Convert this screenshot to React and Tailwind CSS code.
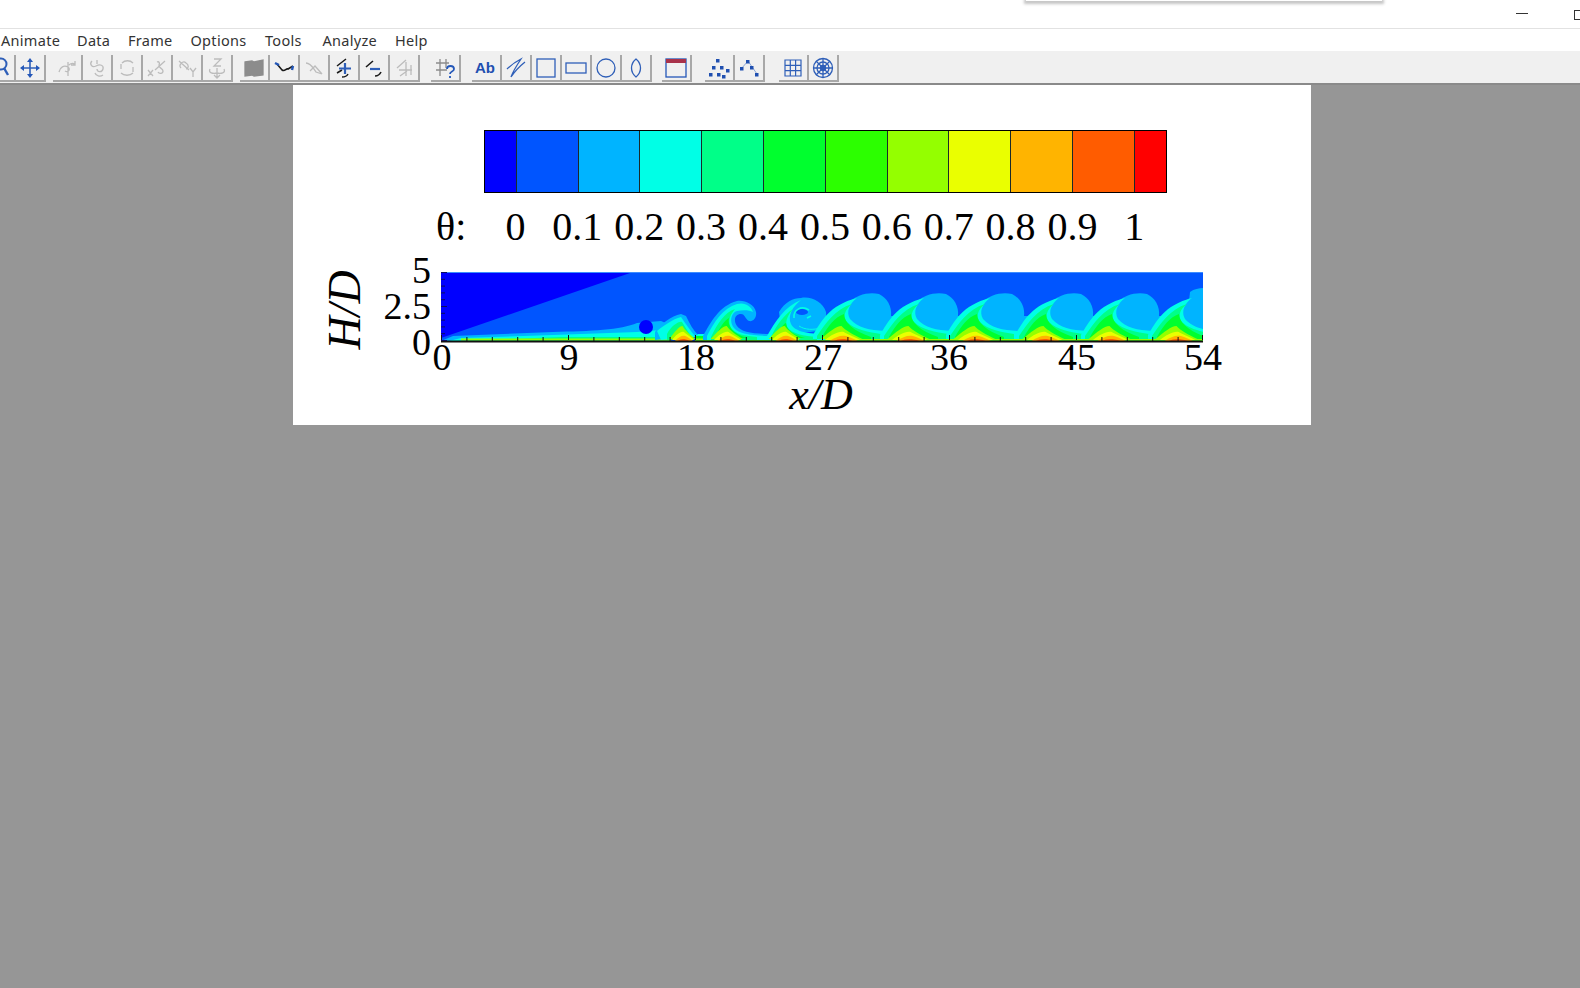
const times = { fontFamily: '"Liberation Serif", serif' };

const BAR = [
  ["#0000ff", 32],
  ["#0055ff", 62],
  ["#00b4ff", 61],
  ["#00ffe6", 62],
  ["#00ff88", 62],
  ["#00ff2e", 62],
  ["#2cff00", 62],
  ["#94ff00", 61],
  ["#eaff00", 62],
  ["#ffb400", 62],
  ["#ff5c00", 62],
  ["#ff0000", 31],
];

const LEVELS = ["0", "0.1", "0.2", "0.3", "0.4", "0.5", "0.6", "0.7", "0.8", "0.9", "1"];
const MENU = [
  ["Animate", "w-[76px]"],
  ["Data", "w-[51px]"],
  ["Frame", "w-[62.5px]"],
  ["Options", "w-[74.5px]"],
  ["Tools", "w-[57.5px]"],
  ["Analyze", "w-[72.5px]"],
  ["Help", "w-[40px]"],
];
const XTICKS = [
  ["0", 1],
  ["9", 128],
  ["18", 255],
  ["27", 382],
  ["36", 508],
  ["45", 636],
  ["54", 762],
];
const CRESTS = [414, 481, 547, 616, 682, 749];

const Tool = ({ children, off }) => (
  <div className="w-[30px] h-[27px] flex items-center justify-center border-r-2 border-b-2 border-[#a8a8a8]">
    <svg width="24" height="24" viewBox="0 0 24 24" fill="none" stroke={off ? "#bcbcbc" : "#2f5fb8"} strokeWidth="1.3">
      {children}
    </svg>
  </div>
);

// hot layers sitting on the wall under a wave
const Bumps = ({ c, s = 1 }) => (
  <>
    <path fill="#94ff00" d={`M${c - 24 * s} 67 C${c - 16 * s} 60 ${c - 10 * s} 54 ${c - 5 * s} 54 C${c - 2 * s} 58 ${c + 6 * s} 63 ${c + 14 * s} 67 Z`} />
    <path fill="#eaff00" d={`M${c - 20 * s} 68 C${c - 14 * s} 63 ${c - 8 * s} 59 ${c - 3 * s} 60 C${c + 1 * s} 63 ${c + 8 * s} 65 ${c + 12 * s} 68 Z`} />
    <path fill="#ffb400" d={`M${c - 16 * s} 69 C${c - 10 * s} 65 ${c - 6 * s} 63 ${c - 1 * s} 64 C${c + 3 * s} 65 ${c + 6 * s} 67 ${c + 10 * s} 69 Z`} />
    <path fill="#ff5c00" d={`M${c - 12 * s} 69 C${c - 8 * s} 67 ${c - 3 * s} 66 ${c + 5 * s} 69 Z`} />
  </>
);

const Core = ({ c }) => (
  <path
    fill="#00b4ff"
    d={`M${c - 8} 32 C${c + 2} 22 ${c + 14} 20 ${c + 24} 22 C${c + 32} 26 ${c + 37} 34 ${c + 36} 44 L${c + 30} 58 L${c + 6} 62 L${c - 10} 50 Z`}
  />
);

const Crest = ({ c }) => (
  <>
    <path
      fill="#00ffe6"
      d={`M${c - 42} 63 C${c - 34} 50 ${c - 26} 33 ${c + 2} 26 C${c - 6} 32 ${c - 9} 40 ${c - 5} 47 C${c + 3} 56 ${c + 14} 58 ${c + 30} 59 L${c + 30} 67 L${c - 42} 67 Z`}
    />
    <path
      fill="#00ff88"
      d={`M${c - 38} 64 C${c - 30} 52 ${c - 20} 37 ${c - 3} 32 C${c - 11} 38 ${c - 12} 45 ${c - 8} 50 C${c} 58 ${c + 14} 60 ${c + 26} 62 L${c + 26} 67 L${c - 38} 67 Z`}
    />
    <path fill="#00ff2e" d={`M${c - 33} 65 C${c - 27} 54 ${c - 20} 45 ${c - 11} 42 C${c - 11} 50 ${c - 2} 59 ${c + 16} 65 L${c + 16} 67 L${c - 33} 67 Z`} />
    <Bumps c={c - 8} s={1.1} />
  </>
);

const Plot = () => (
  <svg width="762" height="72" viewBox="0 0 762 72" className="block">
    <rect width="762" height="70" fill="#0055ff" />
    <polygon points="0,0 192,0 0,66" fill="#0000ff" />

    {/* developing layer before the first wave */}
    <path fill="#00b4ff" d="M0 69 L12 64 L112 60 C150 59 180 58 196 51 L220 49 L236 56 L250 66 L0 70 Z" />
    <path fill="#00ffe6" d="M8 69 L20 66 L112 63 L196 60 L220 58 L222 68 Z" />
    <path fill="#00ff88" d="M12 69 L120 65 L230 65 L230 69 Z" />
    <rect x="20" y="66.5" width="210" height="2" fill="#94ff00" />
    <circle cx="205" cy="55" r="7" fill="#0000ff" />

    {/* wall band under the rolled up part */}
    <rect x="254" y="62" width="508" height="7" fill="#00ffe6" />
    <rect x="254" y="64" width="508" height="5" fill="#00ff2e" />
    <rect x="254" y="66.5" width="508" height="2" fill="#94ff00" />

    {/* first bump */}
    <path fill="#00b4ff" d="M214 60 C220 52 230 44 240 42 L245 44 C249 52 252 58 257 63 L214 68 Z" />
    <path fill="#00ffe6" d="M216 59 C222 54 232 47 240 45 C245 52 250 60 255 65 L220 68 Z" />
    <path fill="#00ff88" d="M226 62 C230 54 238 49 241 50 C245 56 248 62 252 66 L226 68 Z" />
    <path fill="#2cff00" d="M232 64 C236 58 239 54 241 55 C244 60 247 63 250 67 L232 68 Z" />
    <Bumps c={245} s={0.7} />

    {/* second wave, small hook */}
    <path fill="#00b4ff" d="M262 64 C270 50 278 34 296 29 C304 28 313 32 315 40 C316 46 312 50 308 49 C304 47 304 42 300 42 C294 42 292 48 296 54 C300 60 312 62 330 62 L330 68 L262 68 Z" />
    <path fill="#00ffe6" d="M266 64 C273 50 282 36 296 32 C304 30 310 34 312 40 C308 38 302 38 296 39 C290 41 288 50 293 56 C298 62 310 63 326 64 L326 68 L266 68 Z" />
    <path fill="#00ff88" d="M270 65 C276 52 284 40 294 37 C290 42 286 48 290 56 C294 62 304 64 316 65 L316 68 L270 68 Z" />
    <path fill="#00ff2e" d="M274 66 C278 56 284 48 288 46 C286 54 292 62 306 66 Z" />
    <Bumps c={290} s={0.85} />

    {/* third wave, spiral core */}
    <path fill="#00b4ff" d="M338 40 C344 30 352 26 360 26 C370 24 382 30 385 40 C386 50 382 56 376 59 L356 62 L340 56 Z" />
    <path fill="#00ffe6" d="M326 64 C334 50 344 34 360 28 C352 34 346 44 350 52 C354 60 368 62 384 62 L384 68 L326 68 Z" />
    <path fill="#00ff88" d="M330 65 C336 52 344 42 352 37 C346 44 344 50 346 55 C352 62 362 64 376 65 L376 68 L330 68 Z" />
    <path fill="#00ff2e" d="M334 66 C338 58 342 52 345 51 C346 58 352 63 364 66 Z" />
    <Bumps c={348} s={0.85} />
    <ellipse cx="361" cy="40" rx="6" ry="3" fill="#0055ff" />
    <path d="M353 46 C352 38 360 33 368 38 M366 46 L370 44" stroke="#00ffe6" strokeWidth="1.6" fill="none" />
    <path d="M358 54 C364 58 372 58 380 56" stroke="#00ffe6" strokeWidth="1" fill="none" />

    {/* periodic waves: cores first, crests lap over them */}
    <rect x="384" y="44" width="378" height="16" fill="#00b4ff" />
    {CRESTS.map((c) => (
      <Core key={c} c={c} />
    ))}
    <path fill="#00b4ff" d="M749 20 C753 17 758 16 762 16 L762 59 L745 59 Z" />
    {CRESTS.map((c) => (
      <Crest key={c} c={c} />
    ))}

    <rect width="762" height="1" fill="#3b8cff" />
    <rect y="68.5" width="762" height="2" fill="#111" />
    {Array.from({ length: 31 }, (_, i) => (
      <rect key={i} x={Math.min(i * 25.4, 761)} y={i % 5 === 0 ? 63 : 65} width="1" height="5" fill="#111" />
    ))}
    {Array.from({ length: 11 }, (_, i) => (
      <rect key={i} y={i * 6.8} width={i % 5 === 0 ? 6 : 4} height="1" fill="#0a0a60" />
    ))}
  </svg>
);

export default function App() {
  return (
    <div className="w-[1580px] h-[988px] overflow-hidden bg-[#969696] flex flex-col text-black">
      {/* title strip */}
      <div className="h-[29px] bg-white border-b border-[#e2e2e2] relative shrink-0">
        <div className="absolute left-[1026px] top-0 w-[356px] h-[1px] shadow-[0_1px_3px_2px_#c4c4c4]" />
        <div className="absolute left-[1516px] top-[13px] w-[12px] h-px bg-[#333]" />
        <div className="absolute left-[1574px] top-[10px] w-[8px] h-[10px] border border-[#333]" />
      </div>

      {/* menu bar */}
      <div
        className="h-[22px] bg-white flex items-center pt-[2px] pl-[1px] text-[14.5px] tracking-[0.3px] text-[#333] shrink-0"
        style={{ fontFamily: '"Noto Sans", sans-serif' }}
      >
        {MENU.map(([m, w]) => (
          <span key={m} className={w}>
            {m}
          </span>
        ))}
      </div>

      {/* toolbar */}
      <div className="h-[34px] bg-[#f0f0f0] border-b-2 border-[#8a8a8a] flex items-start pt-[4px] shrink-0 overflow-hidden">
        <div className="flex -ml-[14px]">
          <Tool>
            <circle cx="13" cy="8" r="5.5" strokeWidth="2" />
            <path d="M16 12 L20 19" strokeWidth="2.4" />
          </Tool>
          <Tool>
            <path d="M12 4 V20 M4 12 H20" strokeWidth="1.6" />
            <path d="M12 2 L15 6 H9 Z M12 22 L15 18 H9 Z M2 12 L6 9 V15 Z M22 12 L18 9 V15 Z" fill="#2457b8" stroke="none" />
          </Tool>
        </div>
        <div className="flex ml-[7px]">
          <Tool off>
            <path d="M4 16 C5 11 9 9 13 11 C16 13 13 17 10 15 M13 6 V20 M14 9 C16 7 18 7 20 8 M20 5 V9 H16" />
          </Tool>
          <Tool off>
            <path d="M7 5 C4 8 7 12 11 10 C15 8 19 9 18 13 C17 17 12 16 12 13 M12 4 V8 M10 17 C11 20 15 21 18 19" />
          </Tool>
          <Tool off>
            <path d="M7 7 C10 4 15 4 18 7 M18 17 C15 20 9 20 6 17 M6 8 V13 M18 16 V11" />
          </Tool>
          <Tool off>
            <path d="M3 14 L8 20 M8 14 L3 20 M10 14 L20 5 M12 6 C14 5 15 7 14 9 C13 12 18 12 18 15 C18 18 14 18 13 16" />
          </Tool>
          <Tool off>
            <path d="M4 5 L14 14 M6 12 C3 9 8 4 11 7 C14 9 14 12 11 13 M15 12 L18 16 L21 12 M18 16 V21" />
          </Tool>
          <Tool off>
            <path d="M9 3 H16 L9 10 H16 M12 12 V21 M5 13 C3 17 8 18 12 17 C16 18 21 17 19 13 M9 19 L12 22 L15 19" />
          </Tool>
        </div>
        <div className="flex ml-[7px]">
          <Tool off>
            <path d="M3 6 L10 5 L12 6 L21 4 V19 L12 20 L10 19 L3 20 Z" fill="#8c8c8c" stroke="#8c8c8c" />
          </Tool>
          <Tool>
            <path d="M5 8 L10 14 C13 16 14 12 16 13 L21 10" stroke="#1a1a1a" strokeWidth="1.6" />
            <path d="M3 7 L7 9 M21 10 L20 14" stroke="#2457b8" strokeWidth="2.4" />
          </Tool>
          <Tool off>
            <path d="M4 7 C9 7 11 12 14 16 L20 18 M8 15 L13 10 L20 18" />
          </Tool>
          <Tool>
            <path d="M5 10 L14 3 M5 17 L10 14 M10 21 C13 21 15 20 16 18" stroke="#1a1a1a" strokeWidth="1.5" />
            <path d="M13 7 V18 M7 12.5 H19" strokeWidth="2.2" />
          </Tool>
          <Tool>
            <path d="M4 11 L11 5 M13 20 C16 20 18 18 19 16" stroke="#1a1a1a" strokeWidth="1.6" />
            <path d="M8 13 H18" strokeWidth="2.2" />
          </Tool>
          <Tool off>
            <path d="M5 12 L14 4 M14 6 V20 M7 14 H20 M8 20 L15 15 M19 9 V19" />
          </Tool>
        </div>
        <div className="flex ml-[11px]">
          <Tool off>
            <path d="M3 7 H16 M3 14 H14 M7 3 V20 M13 3 V12" stroke="#8c8c8c" />
            <path d="M14 13 C14 9 21 9 21 13 C21 16 17 15 17 18 M17 20 V22" stroke="#2457b8" strokeWidth="1.8" />
          </Tool>
        </div>
        <div className="flex ml-[11px]">
          <Tool>
            <text x="1" y="17" fontSize="15" fontWeight="700" fill="#1f4fb0" stroke="none" style={{ fontFamily: '"Liberation Sans", sans-serif' }}>
              Ab
            </text>
          </Tool>
          <Tool>
            <path d="M3 13 C7 9 11 6 17 3 C13 9 9 15 7 21 C11 15 16 10 21 6" />
          </Tool>
          <Tool>
            <rect x="3" y="3" width="18" height="18" />
          </Tool>
          <Tool>
            <rect x="2" y="7" width="20" height="10" />
          </Tool>
          <Tool>
            <circle cx="12" cy="12" r="9" />
          </Tool>
          <Tool>
            <path d="M12 3 C18 8 18 16 12 21 C6 16 6 8 12 3 Z" />
          </Tool>
        </div>
        <div className="flex ml-[10px]">
          <Tool>
            <rect x="2" y="3" width="20" height="18" stroke="#2457b8" />
            <rect x="2" y="3" width="20" height="4" fill="#a8324a" stroke="none" />
          </Tool>
        </div>
        <div className="flex ml-[13px]">
          <Tool>
            <g fill="#1f4fb0" stroke="none">
              <rect x="9" y="3" width="3.5" height="3.5" />
              <rect x="5" y="10" width="3.5" height="3.5" />
              <rect x="13" y="10" width="3.5" height="3.5" />
              <rect x="19" y="13" width="3.5" height="3.5" />
              <rect x="2" y="17" width="3.5" height="3.5" />
              <rect x="10" y="17" width="3.5" height="3.5" />
              <rect x="15" y="19" width="3.5" height="3.5" />
            </g>
          </Tool>
          <Tool>
            <path d="M4 13 L11 5 L20 18" stroke="#8aa6d8" strokeWidth="1" />
            <g fill="#1f4fb0" stroke="none">
              <rect x="3" y="11" width="3.5" height="3.5" />
              <rect x="9" y="4" width="3.5" height="3.5" />
              <rect x="13" y="10" width="3.5" height="3.5" />
              <rect x="18" y="17" width="3.5" height="3.5" />
            </g>
          </Tool>
        </div>
        <div className="flex ml-[14px]">
          <Tool>
            <path d="M4 4 H20 V20 H4 Z M4 9.3 H20 M4 14.6 H20 M9.3 4 V20 M14.6 4 V20" strokeWidth="1.2" />
          </Tool>
          <Tool>
            <circle cx="12" cy="12" r="9.5" />
            <circle cx="12" cy="12" r="6" />
            <circle cx="12" cy="12" r="2.5" fill="#2457b8" />
            <path d="M2.5 12 H21.5 M12 2.5 V21.5 M5 5 L19 19 M19 5 L5 19" />
          </Tool>
        </div>
      </div>

      {/* frame */}
      <div className="pl-[293px]">
        <div className="w-[1018px] h-[340px] bg-white flex flex-col items-start pt-[45px]">
          {/* contour legend */}
          <div className="ml-[191px] flex border border-black h-[63px]">
            {BAR.map(([c, w], i) => (
              <div
                key={c}
                className={i < BAR.length - 1 ? "h-full border-r border-[#1a2a2a]" : "h-full"}
                style={{ width: w, backgroundColor: c }}
              />
            ))}
          </div>
          <div className="ml-[143px] mt-[13px] flex items-baseline text-[40px] leading-[42px]" style={times}>
            <span className="w-[48.5px]">θ:</span>
            <div className="flex">
              {LEVELS.map((l) => (
                <span key={l} className="w-[61.9px] text-center whitespace-nowrap">
                  {l}
                </span>
              ))}
            </div>
          </div>

          {/* axes */}
          <div className="ml-[34px] mt-[5px] flex text-[38px] leading-[36px]" style={times}>
            <div className="w-[36px] h-[114px] flex items-center justify-center">
              <span className="italic text-[46px] -rotate-90 whitespace-nowrap">H/D</span>
            </div>
            <div className="w-[78px] flex flex-col gap-[2px] items-end pr-[10px] leading-[34px]">
              <span>5</span>
              <span>2.5</span>
              <span>0</span>
            </div>
            <div className="w-[762px] pt-[19px]">
              <Plot />
              <div className="relative h-[36px]">
                {XTICKS.map(([t, x]) => (
                  <span key={t} className="absolute top-[-5px] -translate-x-1/2" style={{ left: x }}>
                    {t}
                  </span>
                ))}
              </div>
              <div className="text-center italic text-[44px] leading-[40px] -mt-[5px] pr-[2px]">x/D</div>
            </div>
          </div>
        </div>
      </div>
    </div>
  );
}
